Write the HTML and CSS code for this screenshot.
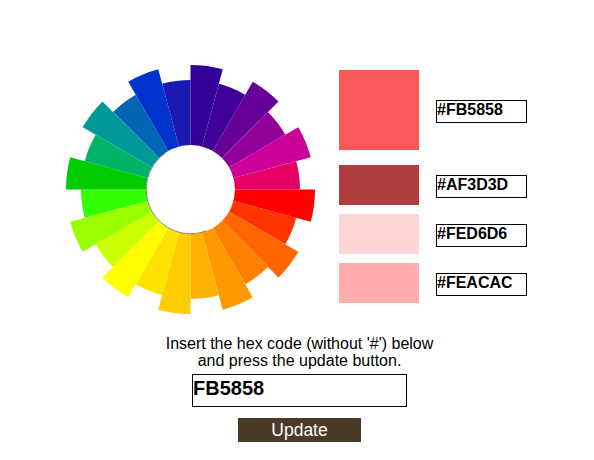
FILE: index.html
```html
<!DOCTYPE html>
<html lang="en">
<head>
<meta charset="utf-8">
<title>Colour Scheme</title>
<link rel="stylesheet" href="styles.css">
</head>
<body>
<main class="page">
  <section class="palette">
    <svg class="wheel" width="251" height="251" viewBox="0 0 251 251" aria-hidden="true">
      <defs>
        <!-- one 15° slice pointing up; each hue is a rotated copy -->
        <path id="slice-long" d="M0 0 L0 -124.5 A124.5 124.5 0 0 1 32.22 -120.26 Z"/>
        <path id="slice-short" d="M0 0 L0 -109.5 A109.5 109.5 0 0 1 28.34 -105.77 Z"/>
      </defs>
      <g transform="translate(125.5 125.5)">
        <use href="#slice-long"  fill="#330099" transform="rotate(0)"/>
        <use href="#slice-short" fill="#3f0099" transform="rotate(15)"/>
        <use href="#slice-long"  fill="#660099" transform="rotate(30)"/>
        <use href="#slice-short" fill="#930099" transform="rotate(45)"/>
        <use href="#slice-long"  fill="#cc0099" transform="rotate(60)"/>
        <use href="#slice-short" fill="#e60066" transform="rotate(75)"/>
        <use href="#slice-long"  fill="#ff0000" transform="rotate(90)"/>
        <use href="#slice-short" fill="#ff3300" transform="rotate(105)"/>
        <use href="#slice-long"  fill="#ff6600" transform="rotate(120)"/>
        <use href="#slice-short" fill="#ff8000" transform="rotate(135)"/>
        <use href="#slice-long"  fill="#ff9900" transform="rotate(150)"/>
        <use href="#slice-short" fill="#ffb300" transform="rotate(165)"/>
        <use href="#slice-long"  fill="#ffcc00" transform="rotate(180)"/>
        <use href="#slice-short" fill="#ffe300" transform="rotate(195)"/>
        <use href="#slice-long"  fill="#ffff00" transform="rotate(210)"/>
        <use href="#slice-short" fill="#ccff00" transform="rotate(225)"/>
        <use href="#slice-long"  fill="#99ff00" transform="rotate(240)"/>
        <use href="#slice-short" fill="#33ff00" transform="rotate(255)"/>
        <use href="#slice-long"  fill="#00cc00" transform="rotate(270)"/>
        <use href="#slice-short" fill="#00b366" transform="rotate(285)"/>
        <use href="#slice-long"  fill="#009999" transform="rotate(300)"/>
        <use href="#slice-short" fill="#0066b3" transform="rotate(315)"/>
        <use href="#slice-long"  fill="#0033cc" transform="rotate(330)"/>
        <use href="#slice-short" fill="#1a1ab3" transform="rotate(345)"/>
        <circle r="44.5" fill="#fff"/>
        <path class="hub-edge" d="M15.15 41.64 A44.3 44.3 0 0 1 -25.41 -36.29"/>
      </g>
    </svg>

    <div class="swatches">
      <div class="swatch-row swatch-row--main">
        <div class="swatch" style="background:#FB5858"></div>
        <span class="code">#FB5858</span>
      </div>
      <div class="swatch-row">
        <div class="swatch" style="background:#AF3D3D"></div>
        <span class="code">#AF3D3D</span>
      </div>
      <div class="swatch-row">
        <div class="swatch" style="background:#FED6D6"></div>
        <span class="code">#FED6D6</span>
      </div>
      <div class="swatch-row">
        <div class="swatch" style="background:#FEACAC"></div>
        <span class="code">#FEACAC</span>
      </div>
    </div>
  </section>

  <form class="picker" onsubmit="return false">
    <p class="hint">Insert the hex code (without '#') below<br>and press the update button.</p>
    <input class="hex-input" type="text" value="FB5858" maxlength="6">
    <button class="update" type="submit">Update</button>
  </form>
</main>
</body>
</html>
```

FILE: styles.css
```css
html, body {
  margin: 0;
  background: #fff;
}

body {
  font-family: "Liberation Sans", Arial, sans-serif;
  color: #000;
}

/* wheel + swatch column */
.palette {
  display: flex;
  align-items: flex-start;
  padding: 64px 0 0 65px;
}

.wheel {
  display: block;
  flex: none;
}

.hub-edge {
  fill: none;
  stroke: #7d7d7d;
  stroke-width: 0.9;
}

.swatches {
  display: flex;
  flex-direction: column;
  gap: 9px;
  margin: 6px 0 0 23px;
}

.swatch-row {
  display: flex;
  align-items: center;
}

.swatch-row--main {
  margin-bottom: 6px;
}

.swatch {
  width: 80px;
  height: 40px;
  flex: none;
}

.swatch-row--main .swatch {
  height: 80px;
}

.code {
  box-sizing: border-box;
  width: 91px;
  height: 23px;
  margin: 2px 0 0 17px;
  padding: 0;
  border: 1px solid #000;
  font-weight: bold;
  font-size: 16px;
  line-height: 18px;
}

/* hex entry form */
.picker {
  display: flex;
  flex-direction: column;
  align-items: center;
  margin: 20px 0 0;
  padding-left: 5px;
}

.hint {
  margin: 0;
  font-size: 16px;
  line-height: 17px;
  text-align: center;
}

.hex-input {
  box-sizing: border-box;
  width: 215px;
  height: 33px;
  margin: 5px 0 0;
  padding: 0 0 5px 0;
  border: 1px solid #000;
  border-radius: 0;
  outline: none;
  background: #fff;
  color: #000;
  font-family: "Liberation Sans", Arial, sans-serif;
  font-weight: bold;
  font-size: 20px;
}

.update {
  width: 123px;
  height: 24px;
  margin: 11px 0 0;
  padding: 0;
  border: none;
  border-radius: 0;
  background: #4a3a28;
  color: #fff;
  font-family: "Liberation Sans", Arial, sans-serif;
  font-size: 17.5px;
  line-height: 24px;
  cursor: pointer;
}
```
